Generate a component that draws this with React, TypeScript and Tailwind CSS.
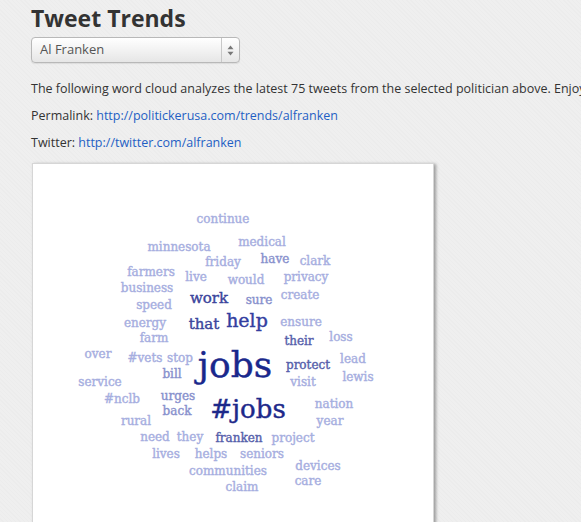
import React from 'react';

interface Word {
  text: string;
  x: number; // centre, page coords
  y: number;
  size: number;
  color: string;
}

const light = '#a6aee0';
const mid = '#8891cd';
const dark = '#5660ab';

const words: Word[] = [
  { text: 'continue', x: 222, y: 219, size: 12, color: light },
  { text: 'minnesota', x: 178, y: 247, size: 12, color: light },
  { text: 'medical', x: 261, y: 242, size: 12, color: light },
  { text: 'friday', x: 222, y: 262, size: 12, color: light },
  { text: 'have', x: 274, y: 259, size: 12, color: mid },
  { text: 'clark', x: 314, y: 261, size: 12, color: light },
  { text: 'farmers', x: 150, y: 272, size: 12, color: light },
  { text: 'live', x: 195, y: 277, size: 12, color: light },
  { text: 'would', x: 245, y: 280, size: 12, color: light },
  { text: 'privacy', x: 305, y: 277, size: 12, color: light },
  { text: 'business', x: 146, y: 288, size: 12, color: light },
  { text: 'work', x: 208, y: 298, size: 15, color: '#3b459c' },
  { text: 'sure', x: 258, y: 300, size: 12, color: mid },
  { text: 'create', x: 299, y: 295, size: 12, color: light },
  { text: 'speed', x: 153, y: 305, size: 12, color: light },
  { text: 'energy', x: 144, y: 323, size: 12, color: light },
  { text: 'that', x: 203, y: 324, size: 15, color: '#3b459c' },
  { text: 'help', x: 246, y: 321, size: 19, color: '#333e9f' },
  { text: 'ensure', x: 300, y: 322, size: 12, color: light },
  { text: 'farm', x: 153, y: 338, size: 12, color: light },
  { text: 'their', x: 298, y: 341, size: 12, color: dark },
  { text: 'loss', x: 340, y: 337, size: 12, color: light },
  { text: 'over', x: 97, y: 354, size: 12, color: light },
  { text: '#vets', x: 144, y: 358, size: 12, color: light },
  { text: 'stop', x: 179, y: 358, size: 12, color: light },
  { text: 'jobs', x: 234, y: 366, size: 36, color: '#1a288c' },
  { text: 'lead', x: 352, y: 359, size: 12, color: light },
  { text: 'protect', x: 307, y: 365, size: 12, color: dark },
  { text: 'bill', x: 171, y: 374, size: 12, color: mid },
  { text: 'lewis', x: 357, y: 377, size: 12, color: light },
  { text: 'service', x: 99, y: 382, size: 12, color: light },
  { text: 'visit', x: 302, y: 382, size: 12, color: light },
  { text: '#nclb', x: 121, y: 399, size: 12, color: light },
  { text: 'urges', x: 177, y: 396, size: 12, color: mid },
  { text: '#jobs', x: 247, y: 410, size: 26, color: '#1d298a' },
  { text: 'back', x: 176, y: 411, size: 12, color: mid },
  { text: 'nation', x: 333, y: 404, size: 12, color: light },
  { text: 'rural', x: 135, y: 421, size: 12, color: light },
  { text: 'year', x: 329, y: 421, size: 12, color: light },
  { text: 'need', x: 154, y: 437, size: 12, color: light },
  { text: 'they', x: 189, y: 437, size: 12, color: light },
  { text: 'franken', x: 238, y: 438, size: 12, color: dark },
  { text: 'project', x: 292, y: 438, size: 12, color: light },
  { text: 'lives', x: 165, y: 454, size: 12, color: light },
  { text: 'helps', x: 210, y: 454, size: 12, color: light },
  { text: 'seniors', x: 261, y: 454, size: 12, color: light },
  { text: 'devices', x: 317, y: 466, size: 12, color: light },
  { text: 'communities', x: 227, y: 471, size: 12, color: light },
  { text: 'care', x: 307, y: 481, size: 12, color: light },
  { text: 'claim', x: 241, y: 487, size: 12, color: light },
];

const CARD_LEFT = 32;
const CARD_TOP = 163;

export default function App() {
  return (
    <div className="h-[522px] overflow-hidden bg-[#eeeeee] bg-[repeating-linear-gradient(45deg,#efefef_0px,#efefef_2px,#ececec_2px,#ececec_3px)] pl-[31px] pt-[2px] font-['Open_Sans',sans-serif] text-[#333]">
      <h1 className="text-[23px] font-bold leading-[32px] text-[#333]">Tweet Trends</h1>

      {/* Politician picker */}
      <div className="mt-[3px] flex h-[26px] w-[209px] items-center rounded-[4px] border border-[#b8b8b8] bg-[linear-gradient(#ffffff,#e6e6e6)] shadow-[0_1px_1px_rgba(0,0,0,0.08)]">
        <span className="flex-1 pl-[8px] text-[13px] text-[#555]">Al Franken</span>
        <span className="flex h-full w-[18px] flex-col items-center justify-center border-l border-[#c8c8c8]">
          <svg width="7" height="11" viewBox="0 0 7 11">
            <path d="M3.5 0.5 L6.5 4.2 H0.5 Z" fill="#777" />
            <path d="M3.5 10.5 L6.5 6.8 H0.5 Z" fill="#777" />
          </svg>
        </span>
      </div>

      <div className="mt-[17px] space-y-[9px] whitespace-nowrap text-[12.5px] leading-[18px]">
        <p>The following word cloud analyzes the latest 75 tweets from the selected politician above. Enjoy!</p>
        <p>
          Permalink: <a className="text-[#1f5fc4]">http://politickerusa.com/trends/alfranken</a>
        </p>
        <p>
          Twitter: <a className="text-[#1f5fc4]">http://twitter.com/alfranken</a>
        </p>
      </div>

      {/* Word cloud */}
      <div className="relative ml-px mt-[11px] h-[380px] w-[402px] border border-[#d6d6d6] bg-white shadow-[2px_1px_3px_rgba(0,0,0,0.35)]">
        {words.map((w) => (
          <span
            key={w.text}
            className="absolute whitespace-nowrap font-['DejaVu_Serif',serif] leading-none [-webkit-text-stroke:0.4px_currentColor]"
            style={{
              left: w.x - CARD_LEFT,
              top: w.y - CARD_TOP,
              fontSize: w.size,
              color: w.color,
              transform: 'translate(-50%, -56%)',
            }}
          >
            {w.text}
          </span>
        ))}
      </div>
    </div>
  );
}
